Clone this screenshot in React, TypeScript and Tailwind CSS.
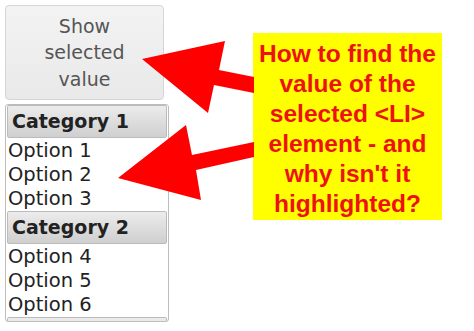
import React from "react";

const groups = [
    { title: "Category 1", options: ["Option 1", "Option 2", "Option 3"] },
    { title: "Category 2", options: ["Option 4", "Option 5", "Option 6"] },
];

const Arrows = () => (
    <svg className="absolute inset-0 pointer-events-none" width="474" height="331" viewBox="0 0 474 331">
        <polygon
            fill="#ff0000"
            points="142,59 225,41 219,70 254,77 254,93 214,85 208,113"
        />
        <polygon
            fill="#ff0000"
            points="118,178 186,125 192,155 254,142 254,157 196,170 201,200"
        />
    </svg>
);

export default function App() {
    return (
        <div className="relative w-[474px] h-[331px] bg-white overflow-hidden">
            <div className="flex items-start pt-[5px] pl-[5px]">
                <div className="flex flex-col w-[164px]">
                    <button
                        className="w-[159px] h-[95px] rounded-[4px] border border-[#d6d6d6] bg-gradient-to-b from-[#f3f3f3] to-[#e9e9e9] text-[#555] text-[19px] leading-[26.5px] font-['DejaVu_Sans',sans-serif]"
                    >
                        Show
                        <br />
                        selected
                        <br />
                        value
                    </button>
                    <ul className="mt-[4px] h-[218px] overflow-hidden rounded-[3px] border border-[#bdbdbd] px-[1px] font-['DejaVu_Sans',sans-serif] text-[19.5px] text-[#222]">
                        {groups.map((g) => (
                            <li key={g.title}>
                                <div className="h-[33px] flex items-center pl-[4px] border border-[#bbb] rounded-[2px] bg-gradient-to-b from-[#ececec] to-[#cfcfcf] font-bold text-[19px] text-[#222]">
                                    {g.title}
                                </div>
                                <ul className="pt-[1px]">
                                    {g.options.map((o) => (
                                        <li key={o} className="leading-[24px] pl-[1px]">
                                            {o}
                                        </li>
                                    ))}
                                </ul>
                            </li>
                        ))}
                        {/* next category header, cut off by the list's height */}
                        <li className="h-[33px] border border-[#bbb] rounded-[2px] bg-gradient-to-b from-[#ececec] to-[#cfcfcf]" />
                    </ul>
                </div>
                <div className="ml-[84px] mt-[28px] w-[189px] h-[187px] pt-[6px] bg-[#ffff00] text-center text-[#ee1111] font-bold text-[24.5px] leading-[30px] font-['Liberation_Sans',Arial,sans-serif]">
                    How to find the
                    <br />
                    value of the
                    <br />
                    selected &lt;LI&gt;
                    <br />
                    element - and
                    <br />
                    why isn't it
                    <br />
                    highlighted?
                </div>
            </div>
            <Arrows />
        </div>
    );
}
